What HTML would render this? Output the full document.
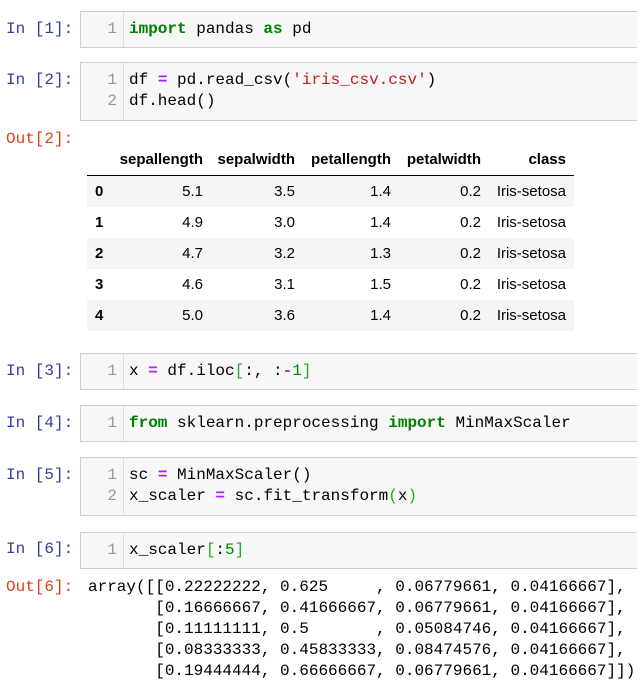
<!DOCTYPE html>
<html><head><meta charset="utf-8"><style>
body{margin:0;width:637px;height:691px;background:#fff;position:relative;overflow:hidden;font-family:"Liberation Mono",monospace;font-size:16px}
.p{position:absolute;left:6px;color:#303f9f;line-height:21px;white-space:pre}
.o{color:#d84315}
.box{position:absolute;left:80px;right:-2px;background:#f7f7f7;border:1px solid #cfcfcf}
.g{position:absolute;left:0;top:0;bottom:0;width:42px;border-right:1px solid #ddd}
.ln{position:absolute;left:0;width:36px;text-align:right;color:#999;line-height:21px}
.c{position:absolute;left:48px;line-height:21px;white-space:pre;color:#000}
.k{color:#008000;font-weight:bold}
.op{color:#aa22ff;font-weight:bold}
.s{color:#ba2121}
.b{color:#22aa22}
.n{color:#080}
.t{position:absolute;left:87px;top:144px;width:487px;font-family:"Liberation Sans",sans-serif;font-size:15px}
.r{position:absolute;left:0;width:487px;height:31px}
.r span{position:absolute;top:7px}
.h span{font-weight:bold}
.st{background:#f5f5f5}
.out{position:absolute;left:88px;top:577px;line-height:21px;white-space:pre;color:#000}
</style></head><body>
<div class="p" style="top:19px">In [1]:</div>
<div class="box" style="top:11px;height:35px"><div class="g"></div><div class="ln" style="top:7px">1</div><div class="c" style="top:7px"><span class="k">import</span> pandas <span class="k">as</span> pd</div></div>

<div class="p" style="top:70px">In [2]:</div>
<div class="box" style="top:62px;height:57px"><div class="g"></div><div class="ln" style="top:7px">1<br>2</div><div class="c" style="top:7px">df <span class="op">=</span> pd.read_csv(<span class="s">'iris_csv.csv'</span>)
df.head()</div></div>
<div class="p o" style="top:129px">Out[2]:</div>

<div class="t">
<div class="r h" style="top:0;height:31px;border-bottom:1px solid #000">
<span style="right:371px">sepallength</span><span style="right:279px">sepalwidth</span><span style="right:183px">petallength</span><span style="right:93px">petalwidth</span><span style="right:8px">class</span></div>
<div class="r st" style="top:32px"><span style="left:8px;font-weight:bold">0</span><span style="right:371px">5.1</span><span style="right:279px">3.5</span><span style="right:183px">1.4</span><span style="right:93px">0.2</span><span style="right:8px">Iris-setosa</span></div>
<div class="r" style="top:63px"><span style="left:8px;font-weight:bold">1</span><span style="right:371px">4.9</span><span style="right:279px">3.0</span><span style="right:183px">1.4</span><span style="right:93px">0.2</span><span style="right:8px">Iris-setosa</span></div>
<div class="r st" style="top:94px"><span style="left:8px;font-weight:bold">2</span><span style="right:371px">4.7</span><span style="right:279px">3.2</span><span style="right:183px">1.3</span><span style="right:93px">0.2</span><span style="right:8px">Iris-setosa</span></div>
<div class="r" style="top:125px"><span style="left:8px;font-weight:bold">3</span><span style="right:371px">4.6</span><span style="right:279px">3.1</span><span style="right:183px">1.5</span><span style="right:93px">0.2</span><span style="right:8px">Iris-setosa</span></div>
<div class="r st" style="top:156px"><span style="left:8px;font-weight:bold">4</span><span style="right:371px">5.0</span><span style="right:279px">3.6</span><span style="right:183px">1.4</span><span style="right:93px">0.2</span><span style="right:8px">Iris-setosa</span></div>
</div>

<div class="p" style="top:361px">In [3]:</div>
<div class="box" style="top:353px;height:35px"><div class="g"></div><div class="ln" style="top:7px">1</div><div class="c" style="top:7px">x <span class="op">=</span> df.iloc<span class="b">[</span>:, :<span class="op">-</span><span class="n">1</span><span class="b">]</span></div></div>

<div class="p" style="top:413px">In [4]:</div>
<div class="box" style="top:405px;height:35px"><div class="g"></div><div class="ln" style="top:7px">1</div><div class="c" style="top:7px"><span class="k">from</span> sklearn.preprocessing <span class="k">import</span> MinMaxScaler</div></div>

<div class="p" style="top:465px">In [5]:</div>
<div class="box" style="top:457px;height:57px"><div class="g"></div><div class="ln" style="top:7px">1<br>2</div><div class="c" style="top:7px">sc <span class="op">=</span> MinMaxScaler()
x_scaler <span class="op">=</span> sc.fit_transform<span class="b">(</span>x<span class="b">)</span></div></div>

<div class="p" style="top:539px">In [6]:</div>
<div class="box" style="top:532px;height:35px"><div class="g"></div><div class="ln" style="top:7px">1</div><div class="c" style="top:7px">x_scaler<span class="b">[</span>:<span class="n">5</span><span class="b">]</span></div></div>
<div class="p o" style="top:577px">Out[6]:</div>
<div class="out">array([[0.22222222, 0.625     , 0.06779661, 0.04166667],
       [0.16666667, 0.41666667, 0.06779661, 0.04166667],
       [0.11111111, 0.5       , 0.05084746, 0.04166667],
       [0.08333333, 0.45833333, 0.08474576, 0.04166667],
       [0.19444444, 0.66666667, 0.06779661, 0.04166667]])</div>
</body></html>
